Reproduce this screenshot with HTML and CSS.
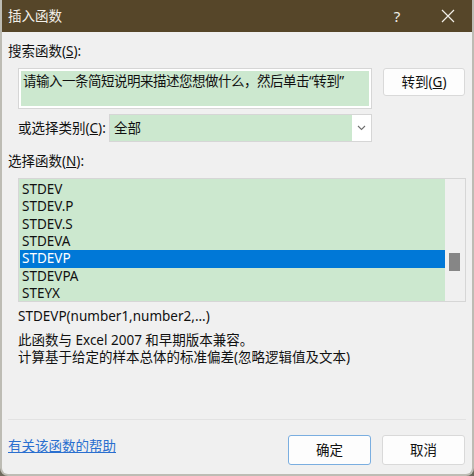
FILE: index.html
```html
<!DOCTYPE html>
<html lang="zh-CN">
<head>
<meta charset="utf-8">
<title>插入函数</title>
<link rel="stylesheet" href="styles.css">
</head>
<body>
<div class="window">
  <div class="titlebar">
    <span class="title">插入函数</span>
    <span class="tb-btn help">?</span>
    <span class="tb-btn close">
      <svg width="14" height="14" viewBox="0 0 14 14"><path d="M1 1 L13 13 M13 1 L1 13" stroke="#f2efe8" stroke-width="1.2" fill="none"/></svg>
    </span>
  </div>
  <div class="content">
    <div class="label">搜索函数(<u>S</u>):</div>
    <div class="search-row">
      <div class="search-box"><div class="search-fill">请输入一条简短说明来描述您想做什么，然后单击“转到”</div></div>
      <div class="btn go">转到(<u>G</u>)</div>
    </div>
    <div class="cat-row">
      <span class="cat-label">或选择类别(<u>C</u>):</span>
      <div class="select">
        <span class="select-val">全部</span>
        <span class="select-arrow"><svg width="9" height="6" viewBox="0 0 9 6"><path d="M1 1 L4.5 4.5 L8 1" stroke="#707070" stroke-width="1.1" fill="none"/></svg></span>
      </div>
    </div>
    <div class="label label2">选择函数(<u>N</u>):</div>
    <div class="list">
      <ul class="items">
        <li>STDEV</li>
        <li>STDEV.P</li>
        <li>STDEV.S</li>
        <li>STDEVA</li>
        <li class="selected">STDEVP</li>
        <li>STDEVPA</li>
        <li>STEYX</li>
      </ul>
      <div class="scroll"><div class="thumb"></div></div>
    </div>
    <div class="syntax">STDEVP(number1,number2,...)</div>
    <div class="desc">
      <div class="desc-line">此函数与 Excel 2007 和早期版本兼容。</div>
      <div class="desc-line">计算基于给定的样本总体的标准偏差(忽略逻辑值及文本)</div>
    </div>
    <div class="sep"></div>
    <div class="footer">
      <a class="help-link" href="#">有关该函数的帮助</a>
      <div class="btns">
        <div class="btn ok">确定</div>
        <div class="btn cancel">取消</div>
      </div>
    </div>
  </div>
</div>
</body>
</html>
```

FILE: styles.css
```css
html, body {
  margin: 0;
  padding: 0;
  background: #6e6a5c;
}
body {
  font-family: "Noto Sans", "Noto Sans CJK SC", sans-serif;
  font-size: 13.5px;
  color: #111;
}
.window {
  width: 474px;
  height: 476px;
  box-sizing: border-box;
  background: #f0f0f0;
  border-left: 2px solid #bdbcb4;
  border-right: 2px solid #bdbcb4;
  border-bottom: 2px solid #bdbcb4;
  border-radius: 0 0 8px 8px;
  overflow: hidden;
}
.titlebar {
  height: 32px;
  margin: 0 -2px;
  background: #564629;
  color: #f2efe8;
  display: flex;
  align-items: center;
}
.title {
  padding-left: 8px;
  flex: 1;
  font-size: 13.5px;
  line-height: 18px;
}
.tb-btn {
  display: flex;
  align-items: center;
  justify-content: center;
  height: 32px;
}
.help {
  width: 46px;
  font-size: 15px;
  margin-right: 2px;
}
.close {
  width: 52px;
}
.content {
  padding: 0 6px;
  display: flex;
  flex-direction: column;
}
.label {
  margin-top: 10px;
  line-height: 18px;
}
.label2 {
  margin-top: 10px;
}
.search-row {
  margin-top: 8px;
  margin-left: 10px;
  display: flex;
  gap: 11px;
  align-items: flex-start;
}
.search-box {
  width: 354px;
  height: 41px;
  box-sizing: border-box;
  border: 1px solid #d6d6d6;
  background: #fff;
  padding: 2px;
}
.search-fill {
  height: 100%;
  background: #cce8cf;
  padding: 1px 2px;
  box-sizing: border-box;
  line-height: 18px;
  white-space: nowrap;
  overflow: hidden;
  letter-spacing: -0.5px;
}
.btn {
  box-sizing: border-box;
  height: 28px;
  width: 82px;
  background: #fdfdfd;
  border: 1px solid #d9d9d9;
  border-radius: 3px;
  display: flex;
  align-items: center;
  justify-content: center;
  line-height: 18px;
}
.cat-row {
  margin-top: 5px;
  margin-left: 10px;
  display: flex;
  align-items: center;
}
.cat-label {
  width: 91px;
  line-height: 18px;
}
.select {
  width: 263px;
  height: 28px;
  box-sizing: border-box;
  border: 1px solid #d6d6d6;
  display: flex;
  background: #fff;
}
.select-val {
  flex: 1;
  background: #cce8cf;
  padding-left: 4px;
  line-height: 26px;
}
.select-arrow {
  width: 19px;
  display: flex;
  align-items: center;
  justify-content: center;
}
.list {
  margin-top: 8px;
  margin-left: 10px;
  height: 124px;
  box-sizing: border-box;
  border: 1px solid #d6d6d6;
  display: flex;
}
.items {
  list-style: none;
  margin: 0;
  padding: 2px 0 0 1px;
  flex: 1;
  background: #cce8cf;
}
.items li {
  height: 17.33px;
  line-height: 17.33px;
  padding-left: 2px;
}
.items li.selected {
  background: #0078d7;
  color: #fff;
}
.scroll {
  width: 20px;
  background: #f0f0f0;
  padding-top: 74px;
  box-sizing: border-box;
}
.thumb {
  width: 11px;
  height: 18px;
  margin-left: 4px;
  background: #868686;
}
.syntax {
  margin-top: 6px;
  margin-left: 10px;
  line-height: 17px;
}
.desc {
  margin-top: 7px;
  margin-left: 10px;
}
.desc-line {
  line-height: 17px;
  height: 17px;
}
.sep {
  margin-top: 53px;
  height: 1px;
  background: #e2e2e2;
}
.footer {
  margin-top: 15px;
  display: flex;
  align-items: flex-start;
}
.help-link {
  margin-top: 2px;
  line-height: 18px;
  color: #2a6fcf;
  text-decoration: underline;
}
.btns {
  margin-left: auto;
  margin-right: 1px;
  display: flex;
  gap: 11px;
}
.btns .btn {
  height: 30px;
  width: 83px;
}
.btn.ok {
  border-color: #7aaee0;
}
```
